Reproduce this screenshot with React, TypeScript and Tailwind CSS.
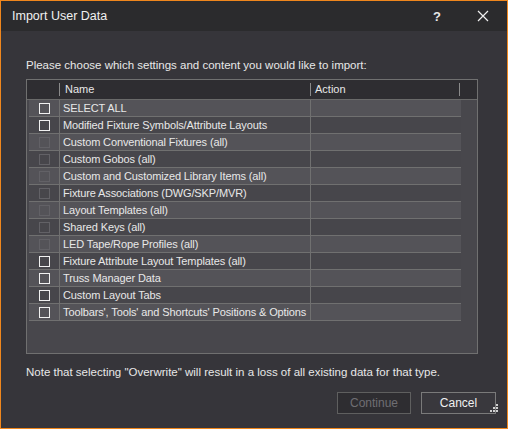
import React from 'react';

const rows: { label: string; enabled: boolean }[] = [
  { label: 'SELECT ALL', enabled: true },
  { label: 'Modified Fixture Symbols/Attribute Layouts', enabled: true },
  { label: 'Custom Conventional Fixtures (all)', enabled: false },
  { label: 'Custom Gobos (all)', enabled: false },
  { label: 'Custom and Customized Library Items (all)', enabled: false },
  { label: 'Fixture Associations (DWG/SKP/MVR)', enabled: false },
  { label: 'Layout Templates (all)', enabled: false },
  { label: 'Shared Keys (all)', enabled: false },
  { label: 'LED Tape/Rope Profiles (all)', enabled: false },
  { label: 'Fixture Attribute Layout Templates (all)', enabled: true },
  { label: 'Truss Manager Data', enabled: true },
  { label: 'Custom Layout Tabs', enabled: true },
  { label: "Toolbars', Tools' and Shortcuts' Positions & Options", enabled: true },
];

export default function App() {
  return (
    <div
      className="w-[508px] h-[429px] border border-[#f0871d] bg-[#36353a] flex flex-col text-[#e8e8e8] text-[11px] leading-none"
      style={{ fontFamily: '"Liberation Sans", Arial, sans-serif' }}
    >
      {/* title bar */}
      <div className="h-[30px] shrink-0 bg-[#2b2b2d] flex items-center pl-[11px]">
        <span className="flex-1 text-[12.5px] text-[#f0f0f0]">Import User Data</span>
        <span className="w-[20px] text-center font-bold text-[13px] mr-[30px]">?</span>
        <svg width="12" height="12" viewBox="0 0 12 12" className="mr-[18px]">
          <path d="M1 1 L11 11 M11 1 L1 11" stroke="#f0f0f0" strokeWidth="1.2" />
        </svg>
      </div>

      <div className="flex flex-col pl-[25px] pr-[29px] pt-[26px]">
        <p className="h-[18px] flex items-center text-[11.5px]">Please choose which settings and content you would like to import:</p>

        {/* table */}
        <div className="mt-[4px] h-[275px] border border-[#707070] bg-[#48474c] flex flex-col">
          <div className="h-[20px] shrink-0 bg-[#2e2d31] border-b border-[#6a6a6a] flex items-center">
            <div className="w-[33px] h-[13px] border-r border-[#8a8a8a]" />
            <div className="w-[251px] h-[13px] border-r border-[#8a8a8a] pl-[5px] flex items-center">Name</div>
            <div className="w-[149px] h-[13px] border-r border-[#8a8a8a] pl-[4px] flex items-center">Action</div>
          </div>
          <div className="flex flex-col pl-[2px] w-[434px]">
            {rows.map((r, i) => (
              <div
                key={r.label}
                className={`h-[17px] flex border-b border-[#707070] ${i % 2 === 0 ? 'bg-[#545358]' : 'bg-[#47464b]'}`}
              >
                <div className="w-[31px] border-r border-[#707070] flex items-center justify-center">
                  <div
                    className={`w-[11px] h-[11px] border ${r.enabled ? 'border-[#f0f0f0]' : 'border-[#626166]'}`}
                  />
                </div>
                <div className="w-[251px] border-r border-[#707070] pl-[3px] flex items-center whitespace-nowrap overflow-hidden tracking-[-0.12px]">
                  {r.label}
                </div>
                <div className="flex-1" />
              </div>
            ))}
          </div>
        </div>

        <p className="mt-[12px] h-[14px] flex items-center text-[11.5px]">
          Note that selecting "Overwrite" will result in a loss of all existing data for that type.
        </p>

        <div className="mt-[12px] flex justify-end gap-[10px] mr-[-18px]">
          <button className="w-[74px] h-[22px] border border-[#5f5f5f] bg-[#2e2d31] text-[#6f6e73] text-[12px]">
            Continue
          </button>
          <button className="w-[75px] h-[22px] border border-[#7a7a7a] bg-[#39383d] text-[#f0f0f0] text-[12px]">
            Cancel
          </button>
        </div>
      </div>

      <div className="relative flex-1">
        <svg width="8" height="8" viewBox="0 0 8 8" className="absolute right-[9px] top-[-10px]">
          <rect x="6" y="0" width="2" height="2" fill="#d0d0d0" />
          <rect x="3" y="3" width="2" height="2" fill="#d0d0d0" />
          <rect x="6" y="3" width="2" height="2" fill="#d0d0d0" />
          <rect x="0" y="6" width="2" height="2" fill="#d0d0d0" />
          <rect x="3" y="6" width="2" height="2" fill="#d0d0d0" />
          <rect x="6" y="6" width="2" height="2" fill="#d0d0d0" />
        </svg>
      </div>
    </div>
  );
}
